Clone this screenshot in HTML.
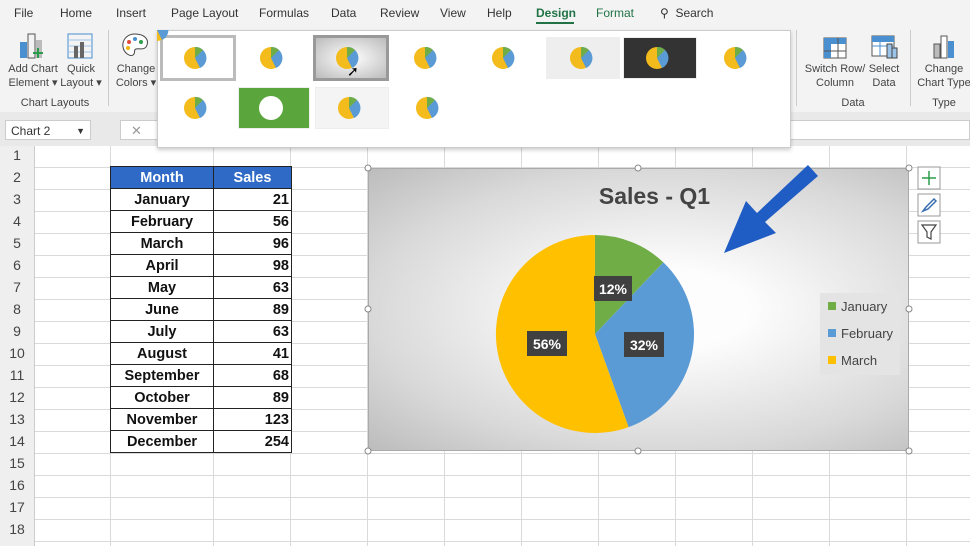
<html><head><style>
body{margin:0;width:970px;height:546px;overflow:hidden;background:#fff;font-family:"Liberation Sans",sans-serif;position:relative}
.a{position:absolute}
.tab{position:absolute;top:6px;font-size:12px;color:#333}
.rl{position:absolute;font-size:11px;color:#444;text-align:center;line-height:14px}
.rh{position:absolute;left:0;width:34px;text-align:center;font-size:14px;color:#444;height:22px;line-height:22px}
.th{position:absolute;width:72px;height:40px;background:#fff;border:1px solid #eee}
.vl{position:absolute;top:146px;width:1px;height:400px;background:#dadada}
table td{padding:0;box-sizing:border-box}
</style></head><body>
<div class="a" style="left:0;top:0;width:970px;height:112px;background:#f3f3f3"></div>
<div class="tab" style="left:14px">File</div><div class="tab" style="left:60px">Home</div><div class="tab" style="left:116px">Insert</div><div class="tab" style="left:171px">Page Layout</div><div class="tab" style="left:259px">Formulas</div><div class="tab" style="left:331px">Data</div><div class="tab" style="left:380px">Review</div><div class="tab" style="left:440px">View</div><div class="tab" style="left:487px">Help</div>
<div class="tab" style="left:536px;color:#217346;font-weight:bold">Design</div><div class="a" style="left:536px;top:22px;width:38px;height:2px;background:#217346"></div>
<div class="tab" style="left:596px;color:#217346">Format</div><div class="tab" style="left:660px">⚲&nbsp;&nbsp;Search</div>
<svg class="a" style="left:18px;top:32px" width="30" height="28"><rect x="2" y="10" width="7" height="16" fill="#4a8fd0"/><rect x="10" y="2" width="7" height="24" fill="none" stroke="#555"/><rect x="18" y="8" width="6" height="18" fill="#bbb"/><path d="M20 16v10M15 21h10" stroke="#2a9d4a" stroke-width="2"/></svg>
<svg class="a" style="left:66px;top:32px" width="28" height="28"><rect x="2" y="2" width="24" height="24" fill="none" stroke="#4a8fd0"/><path d="M2 8h24M2 14h24M2 20h24" stroke="#9cc4e8"/><rect x="8" y="14" width="4" height="12" fill="#666"/><rect x="14" y="10" width="4" height="16" fill="#666"/></svg>
<div class="rl" style="left:4px;top:62px;width:58px">Add Chart<br>Element ▾</div>
<div class="rl" style="left:60px;top:62px;width:42px">Quick<br>Layout ▾</div>
<div class="rl" style="left:10px;top:96px;width:90px">Chart Layouts</div>
<div class="a" style="left:108px;top:30px;width:1px;height:76px;background:#ccc"></div>
<svg class="a" style="left:120px;top:32px" width="30" height="28"><path d="M15 2C6 2 2 9 3 15s7 10 10 8 0-5 3-6 9 2 11-4S24 2 15 2z" fill="#fff" stroke="#444"/><circle cx="9" cy="10" r="2" fill="#e04a3a"/><circle cx="15" cy="7" r="2" fill="#4a8fd0"/><circle cx="21" cy="10" r="2" fill="#2a9d4a"/><circle cx="8" cy="16" r="2" fill="#f0b400"/></svg>
<div class="rl" style="left:114px;top:62px;width:44px">Change<br>Colors ▾</div>
<div class="a" style="left:796px;top:30px;width:1px;height:76px;background:#ccc"></div>
<svg class="a" style="left:820px;top:32px" width="30" height="28"><rect x="4" y="6" width="22" height="20" fill="#fff" stroke="#555"/><rect x="4" y="6" width="22" height="6" fill="#4a8fd0"/><rect x="4" y="6" width="7" height="20" fill="#4a8fd0"/><path d="M4 19h22M18 6v20" stroke="#555"/></svg>
<svg class="a" style="left:870px;top:32px" width="30" height="28"><rect x="2" y="4" width="22" height="20" fill="#fff" stroke="#555"/><rect x="2" y="4" width="22" height="6" fill="#4a8fd0"/><path d="M2 14h22M10 4v20" stroke="#4a8fd0"/><rect x="17" y="12" width="5" height="14" fill="#9cc4e8" stroke="#444"/><rect x="22" y="16" width="5" height="10" fill="#9cc4e8" stroke="#444"/></svg>
<div class="rl" style="left:804px;top:62px;width:62px">Switch Row/<br>Column</div>
<div class="rl" style="left:866px;top:62px;width:36px">Select<br>Data</div>
<div class="rl" style="left:820px;top:96px;width:66px">Data</div>
<div class="a" style="left:910px;top:30px;width:1px;height:76px;background:#ccc"></div>
<svg class="a" style="left:930px;top:32px" width="28" height="28"><rect x="4" y="12" width="6" height="14" fill="#bbb" stroke="#555"/><rect x="11" y="4" width="6" height="22" fill="#fff" stroke="#555"/><rect x="18" y="9" width="6" height="17" fill="#4a8fd0"/></svg>
<div class="rl" style="left:914px;top:62px;width:60px">Change<br>Chart Type</div>
<div class="rl" style="left:914px;top:96px;width:60px">Type</div>
<div class="a" style="left:0;top:112px;width:970px;height:34px;background:#e9e9e9"></div>
<div class="a" style="left:5px;top:120px;width:86px;height:20px;background:#fff;border:1px solid #ccc;font-size:12px;line-height:20px;color:#333;padding-left:5px;box-sizing:border-box">Chart 2<span style="float:right;margin-right:5px;font-size:9px">▼</span></div>
<div class="a" style="left:120px;top:120px;width:850px;height:20px;background:#fff;border:1px solid #ccc;font-size:13px;color:#999;line-height:20px;padding-left:10px;box-sizing:border-box">✕</div>
<!-- grid -->
<div class="a" style="left:0;top:146px;width:970px;height:400px;background-image:linear-gradient(#dadada 1px,transparent 1px);background-size:1000px 22px;background-position:0 -1px"></div>
<div class="vl" style="left:110px"></div><div class="vl" style="left:213px"></div><div class="vl" style="left:290px"></div><div class="vl" style="left:367px"></div><div class="vl" style="left:444px"></div><div class="vl" style="left:521px"></div><div class="vl" style="left:598px"></div><div class="vl" style="left:675px"></div><div class="vl" style="left:752px"></div><div class="vl" style="left:829px"></div><div class="vl" style="left:906px"></div>
<div class="a" style="left:0;top:146px;width:34px;height:400px;background:#efefef;border-right:1px solid #ccc"></div>
<div class="rh" style="top:144px">1</div><div class="rh" style="top:166px">2</div><div class="rh" style="top:188px">3</div><div class="rh" style="top:210px">4</div><div class="rh" style="top:232px">5</div><div class="rh" style="top:254px">6</div><div class="rh" style="top:276px">7</div><div class="rh" style="top:298px">8</div><div class="rh" style="top:320px">9</div><div class="rh" style="top:342px">10</div><div class="rh" style="top:364px">11</div><div class="rh" style="top:386px">12</div><div class="rh" style="top:408px">13</div><div class="rh" style="top:430px">14</div><div class="rh" style="top:452px">15</div><div class="rh" style="top:474px">16</div><div class="rh" style="top:496px">17</div><div class="rh" style="top:518px">18</div>
<!-- table -->
<div class="a" style="left:110px;top:166px">
<table style="border-collapse:collapse;table-layout:fixed;width:181px;font-size:14.5px;font-weight:bold;color:#111">
<col style="width:103px"><col style="width:78px">
<tr style="background:#2f6bc6;color:#fff;height:22px"><td style="text-align:center;border:1px solid #222">Month</td><td style="text-align:center;border:1px solid #222">Sales</td></tr>
<tr style="height:22px"><td style="text-align:center;border:1px solid #222;background:#fff">January</td><td style="text-align:right;border:1px solid #222;background:#fff;padding-right:2px">21</td></tr>
<tr style="height:22px"><td style="text-align:center;border:1px solid #222;background:#fff">February</td><td style="text-align:right;border:1px solid #222;background:#fff;padding-right:2px">56</td></tr>
<tr style="height:22px"><td style="text-align:center;border:1px solid #222;background:#fff">March</td><td style="text-align:right;border:1px solid #222;background:#fff;padding-right:2px">96</td></tr>
<tr style="height:22px"><td style="text-align:center;border:1px solid #222;background:#fff">April</td><td style="text-align:right;border:1px solid #222;background:#fff;padding-right:2px">98</td></tr>
<tr style="height:22px"><td style="text-align:center;border:1px solid #222;background:#fff">May</td><td style="text-align:right;border:1px solid #222;background:#fff;padding-right:2px">63</td></tr>
<tr style="height:22px"><td style="text-align:center;border:1px solid #222;background:#fff">June</td><td style="text-align:right;border:1px solid #222;background:#fff;padding-right:2px">89</td></tr>
<tr style="height:22px"><td style="text-align:center;border:1px solid #222;background:#fff">July</td><td style="text-align:right;border:1px solid #222;background:#fff;padding-right:2px">63</td></tr>
<tr style="height:22px"><td style="text-align:center;border:1px solid #222;background:#fff">August</td><td style="text-align:right;border:1px solid #222;background:#fff;padding-right:2px">41</td></tr>
<tr style="height:22px"><td style="text-align:center;border:1px solid #222;background:#fff">September</td><td style="text-align:right;border:1px solid #222;background:#fff;padding-right:2px">68</td></tr>
<tr style="height:22px"><td style="text-align:center;border:1px solid #222;background:#fff">October</td><td style="text-align:right;border:1px solid #222;background:#fff;padding-right:2px">89</td></tr>
<tr style="height:22px"><td style="text-align:center;border:1px solid #222;background:#fff">November</td><td style="text-align:right;border:1px solid #222;background:#fff;padding-right:2px">123</td></tr>
<tr style="height:22px"><td style="text-align:center;border:1px solid #222;background:#fff">December</td><td style="text-align:right;border:1px solid #222;background:#fff;padding-right:2px">254</td></tr>
</table></div>
<!-- gallery -->
<div class="a" style="left:157px;top:30px;width:632px;height:116px;background:#fff;border:1px solid #ccc;box-shadow:0 2px 4px rgba(0,0,0,.2)"></div>
<div class="th" style="left:160px;top:35px;border:3px solid #bbb;width:70px"></div>
<div class="th" style="left:313px;top:35px;border:3px solid #999;width:70px;background:radial-gradient(#fff,#bbb)"></div>
<div class="th" style="left:546px;top:37px;background:#eee"></div>
<div class="th" style="left:623px;top:37px;background:#333"></div>
<div class="th" style="left:238px;top:87px;background:#5aa63c;width:70px"></div>
<div class="th" style="left:315px;top:87px;background:#f4f4f4"></div>
<svg class="a" style="left:157px;top:30px" width="632" height="116">
<g id="p"><circle r="11" fill="#f4bb1c"/><path d="M0-11A11 11 0 0 1 5 10L0 0z" fill="#5b9bd5"/><path d="M0-11A11 11 0 0 1 8-8L0 0z" fill="#70ad47"/></g>
<use href="#p" x="38" y="28"/><use href="#p" x="114" y="28"/><use href="#p" x="190" y="28"/><use href="#p" x="268" y="28"/><use href="#p" x="346" y="28"/><use href="#p" x="424" y="28"/><use href="#p" x="500" y="28"/><use href="#p" x="578" y="28"/>
<use href="#p" x="38" y="78"/><circle cx="114" cy="78" r="12" fill="#fff"/><use href="#p" x="192" y="78"/><use href="#p" x="270" y="78"/>
</svg>
<div class="a" style="left:347px;top:63px;font-size:14px">➚</div>
<!-- chart -->
<div class="a" style="left:368px;top:168px;width:541px;height:283px;background:radial-gradient(ellipse at 55% 50%,#fdfdfd 20%,#d9d9d9 70%,#bcbcbc 100%);border:1px solid #aaa;box-sizing:border-box"></div>
<div class="a" style="left:368px;top:183px;width:541px;text-align:center;font-size:23px;font-weight:bold;color:#444">&nbsp;&nbsp;&nbsp;&nbsp;&nbsp;Sales - Q1</div>
<svg class="a" style="left:0;top:0" width="970" height="546">
<path d="M595 334L595 235A99 99 0 0 1 663.4 262.4Z" fill="#70ad47"/>
<path d="M595 334L663.4 262.4A99 99 0 0 1 628.6 427.1Z" fill="#5b9bd5"/>
<path d="M595 334L628.6 427.1A99 99 0 1 1 595 235Z" fill="#ffc000"/>
<rect x="594" y="276" width="38" height="25" fill="#404040"/><text x="613" y="294" fill="#fff" font-size="14" font-weight="bold" text-anchor="middle" font-family="Liberation Sans">12%</text>
<rect x="624" y="332" width="40" height="25" fill="#404040"/><text x="644" y="350" fill="#fff" font-size="14" font-weight="bold" text-anchor="middle" font-family="Liberation Sans">32%</text>
<rect x="527" y="331" width="40" height="25" fill="#404040"/><text x="547" y="349" fill="#fff" font-size="14" font-weight="bold" text-anchor="middle" font-family="Liberation Sans">56%</text>
<rect x="820" y="293" width="80" height="82" fill="#e4e4e4"/>
<rect x="828" y="302" width="8" height="8" fill="#70ad47"/><text x="841" y="311" font-size="13" fill="#444" font-family="Liberation Sans">January</text>
<rect x="828" y="329" width="8" height="8" fill="#5b9bd5"/><text x="841" y="338" font-size="13" fill="#444" font-family="Liberation Sans">February</text>
<rect x="828" y="356" width="8" height="8" fill="#ffc000"/><text x="841" y="365" font-size="13" fill="#444" font-family="Liberation Sans">March</text>
<g fill="#fff" stroke="#888"><circle cx="368" cy="168" r="3"/><circle cx="638" cy="168" r="3"/><circle cx="909" cy="168" r="3"/><circle cx="368" cy="309" r="3"/><circle cx="909" cy="309" r="3"/><circle cx="368" cy="451" r="3"/><circle cx="638" cy="451" r="3"/><circle cx="909" cy="451" r="3"/></g>
<path d="M818 176L808 165L757 213L746 201L724 253L776 233L765 222Z" fill="#1f5cc4"/>
<g fill="#fff" stroke="#999"><rect x="918" y="167" width="22" height="22"/><rect x="918" y="194" width="22" height="22"/><rect x="918" y="221" width="22" height="22"/></g>
<path d="M929 171v14M922 178h14" stroke="#2a9d4a" stroke-width="1.5"/>
<path d="M923 211l3-4 8-8 2 2-8 8z" fill="none" stroke="#3a6fb0" stroke-width="1.5"/>
<path d="M922 225h14l-5 7v7l-4-2v-5z" fill="none" stroke="#444" stroke-width="1.2"/>
</svg>
</body></html>
